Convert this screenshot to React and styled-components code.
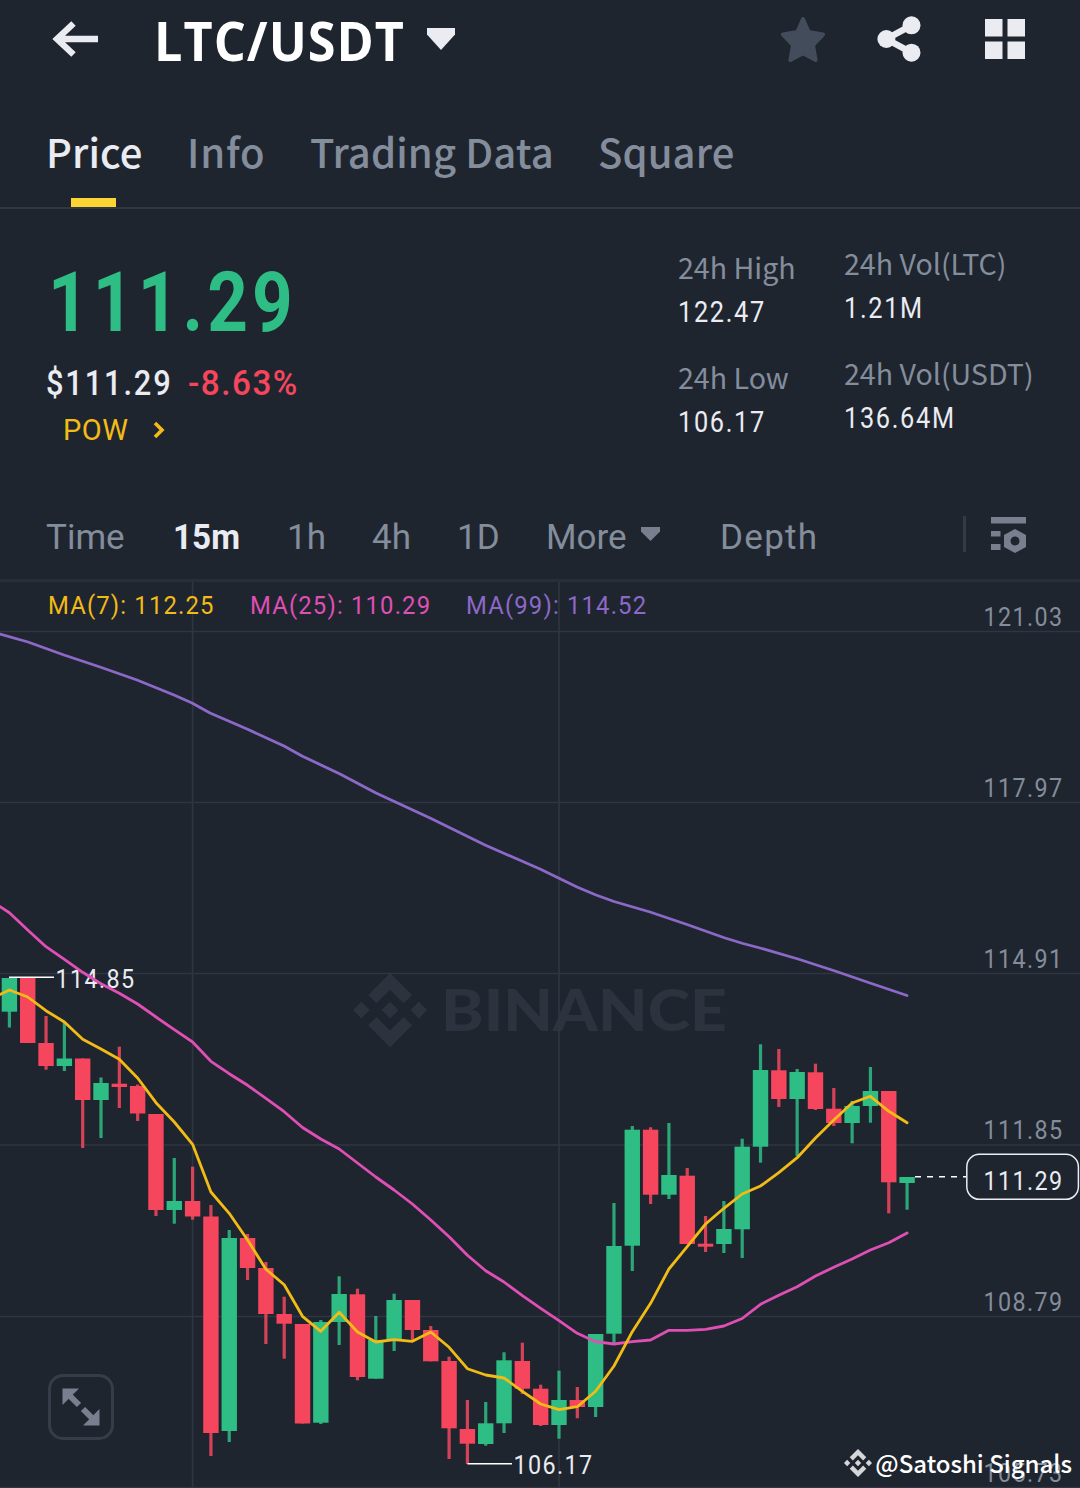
import React from 'react';
import styled, { createGlobalStyle } from 'styled-components';


const colors = {
  background: '#1f252f',
  line: '#303742',
  grid: '#2f3641',
  text: '#eaecf2',
  muted: '#848d9c',
  up: '#2ebd85',
  down: '#f6465d',
  yellow: '#f2bb16',
  pink: '#df4fb5',
  purple: '#8c69c8',
  watermark: '#2d333e'
};

const textFont = '"Noto Sans CJK SC", "Open Sans", sans-serif';
const numberFont = 'Roboto, "Liberation Sans", sans-serif';

const GlobalStyle = createGlobalStyle`
  body {
    margin: 0;
    background: ${colors.background};
    overflow: hidden;
  }
`

const Page = styled.div`
  width: 1080px;
  height: 1488px;
  display: flex;
  flex-direction: column;
  overflow: hidden;
  background: ${colors.background};
  color: ${colors.text};
  font-family: ${textFont};
`

const Icon = styled.svg`
  display: block;
  flex: none;
`

// Condensed text, the box keeps the given width and the glyphs are squeezed
const Label = styled.span`
  display: block;
  flex: none;
  width: ${ props => props.$width ? `${props.$width}px` : 'auto' };
  white-space: nowrap;
  font-family: ${ props => props.$number ? numberFont : textFont };
  font-size: ${ props => props.$size }px;
  line-height: ${ props => props.$height }px;
  font-weight: ${ props => props.$weight || 400 };
  letter-spacing: ${ props => props.$track || 0 }px;
  color: ${ props => props.$color || colors.text };
  transform: scaleX(${ props => props.$stretch || 1 });
  transform-origin: left center;
`

const Header = styled.header`
  box-sizing: border-box;
  height: 80px;
  display: flex;
  align-items: center;
  padding: 0 55px 2px 52px;
`

const Pair = styled.div`
  display: flex;
  align-items: center;
  gap: 22px;
  margin-left: 56px;
  flex: 1;
`

const PairName = styled(Label)`
  font-family: "Open Sans", sans-serif;
  padding-top: 3px;
`

const Actions = styled.div`
  display: flex;
  align-items: center;
  gap: 51px;

  & > :last-child {
    margin-left: 13px;
  }
`

const Tabs = styled.nav`
  box-sizing: border-box;
  height: 129px;
  display: grid;
  grid-template-columns: 141px 123px 288px 200px;
  padding: 41px 0 0 46px;
  border-bottom: 2px solid ${colors.line};
`

const Tab = styled.div`
  display: flex;
  flex-direction: column;
  justify-content: space-between;
`

const Underline = styled.div`
  width: 45px;
  height: 9px;
  margin-left: 25px;
  background: #fcd535;
`

const Summary = styled.section`
  height: 281px;
  display: flex;
  justify-content: space-between;
`

const Prices = styled.div`
  padding: 51px 0 0 46px;
`

const LastPrice = styled(Label)`
  margin-left: 2px;
`

const SubPrice = styled.div`
  display: flex;
  margin-top: 15px;
`

const Tag = styled.div`
  display: flex;
  align-items: center;
  margin: 3px 0 0 17px;
`

const Stats = styled.div`
  display: grid;
  grid-template-columns: 166px 236px;
`

const StatColumn = styled.div`
  padding-top: ${ props => props.$top }px;
`

const Stat = styled.div`
  height: 110px;
`

const Intervals = styled.nav`
  box-sizing: border-box;
  height: 92px;
  display: flex;
  align-items: center;
  padding: 7px 54px 0 46px;
  border-bottom: 3px solid #292f3a;
`

const MoreCaret = styled(Icon)`
  margin: 0 60px 8px 0;
`

const Separator = styled.div`
  width: 3px;
  height: 36px;
  margin: 0 25px 9px auto;
  background: #333a45;
`

const SettingsIcon = styled(Icon)`
  margin-bottom: 7px;
`

const ChartArea = styled.section`
  position: relative;
  height: 906px;
`

const Legend = styled.div`
  position: absolute;
  top: 7px;
  left: 48px;
  display: flex;
`

const ExpandButton = styled.button`
  position: absolute;
  left: 48px;
  bottom: 48px;
  box-sizing: border-box;
  width: 66px;
  height: 66px;
  padding: 0;
  display: flex;
  align-items: center;
  justify-content: center;
  border: 3px solid #363d48;
  border-radius: 15px;
  background: ${colors.background};
`

const Credit = styled.div`
  position: absolute;
  right: 8px;
  bottom: 7px;
  display: flex;
  align-items: center;
  gap: 3px;
`

const tabs = ['Price', 'Info', 'Trading Data', 'Square'];

const stats = [
  { top: 40, items: [
    { label: '24h High', value: '122.47' },
    { label: '24h Low', value: '106.17' }
  ]},
  { top: 36, items: [
    { label: '24h Vol(LTC)', value: '1.21M' },
    { label: '24h Vol(USDT)', value: '136.64M' }
  ]}
];

const legend = [
  { text: 'MA(7): 112.25', color: colors.yellow, width: 202 },
  { text: 'MA(25): 110.29', color: colors.pink, width: 216 },
  { text: 'MA(99): 114.52', color: colors.purple, width: 200 }
];

const axis = [
  { y: 631.5, label: '121.03' },
  { y: 802.5, label: '117.97' },
  { y: 973.5, label: '114.91' },
  { y: 1145, label: '111.85' },
  { y: 1316.5, label: '108.79' },
  { y: 1487.5, label: '105.73' }
];

// [rising, body top, body bottom, wick top, wick bottom]
const candles = [
  [1, 978, 1011.7, 978, 1027.5],
  [0, 978, 1043, 978, 1043],
  [0, 1043, 1066, 1016, 1069.7],
  [1, 1058.5, 1066, 1022.5, 1071],
  [0, 1058.5, 1100, 1058.5, 1148],
  [1, 1083, 1100, 1077.5, 1138],
  [0, 1083.7, 1087, 1046.7, 1108],
  [0, 1086, 1113.5, 1084.5, 1121],
  [0, 1114, 1210, 1114, 1216],
  [1, 1201, 1210, 1158, 1223.7],
  [0, 1201, 1216.5, 1166.7, 1219.7],
  [0, 1216.5, 1433, 1205, 1456],
  [1, 1238, 1431, 1230, 1442],
  [0, 1238, 1268, 1234, 1280],
  [0, 1268, 1314, 1262, 1344],
  [0, 1314, 1323.7, 1296.7, 1358.7],
  [0, 1324, 1423.5, 1324, 1423.5],
  [1, 1322, 1422.7, 1320, 1424],
  [1, 1294, 1322, 1276.3, 1345],
  [0, 1294.3, 1377, 1288.7, 1380.3],
  [1, 1340, 1378.7, 1316, 1378.7],
  [1, 1300, 1340, 1293.7, 1351],
  [0, 1300, 1330, 1300, 1340],
  [0, 1330, 1361.3, 1326, 1361.3],
  [0, 1361, 1428.3, 1356.7, 1459],
  [0, 1429, 1443.7, 1400, 1464],
  [1, 1423.3, 1444, 1402, 1445.7],
  [1, 1360.3, 1423.3, 1352.3, 1433],
  [0, 1361, 1388.7, 1342.7, 1394],
  [0, 1388.7, 1425, 1384.7, 1426],
  [1, 1400, 1425, 1370.7, 1438.7],
  [0, 1400, 1407, 1387, 1418.3],
  [1, 1334, 1407, 1334, 1417],
  [1, 1246, 1333.7, 1203, 1343.3],
  [1, 1129.7, 1245.7, 1126, 1271],
  [0, 1129.7, 1194.7, 1127.3, 1204],
  [1, 1175, 1194.7, 1123, 1199],
  [0, 1175.7, 1244, 1168, 1244],
  [0, 1243.7, 1246.7, 1216, 1252],
  [1, 1229, 1244, 1201, 1253],
  [1, 1146.7, 1229.3, 1138.7, 1258],
  [1, 1070, 1146.7, 1044.3, 1162.7],
  [0, 1070.3, 1099, 1049, 1107],
  [1, 1072, 1099, 1069, 1156],
  [0, 1072.3, 1109, 1063.7, 1110],
  [0, 1108.7, 1123, 1088, 1126],
  [1, 1106, 1123, 1101, 1143.3],
  [1, 1091, 1106, 1067, 1122.7],
  [0, 1091, 1182.3, 1091, 1213.3],
  [1, 1177, 1183, 1177, 1209.7]
];

const ma7 = [
  990, 997, 1010.7, 1022, 1039.3, 1049, 1059.3, 1078, 1102.7, 1122,
  1144.3, 1192, 1213.3, 1240, 1269.3, 1284.7, 1316.3, 1331.3, 1312.3, 1332,
  1342, 1339.7, 1341.3, 1332, 1347.3, 1368.7, 1375, 1378, 1391.3, 1404,
  1409.7, 1406.7, 1391.3, 1366, 1331.7, 1303.3, 1269, 1246.7, 1224, 1208.3,
  1194, 1186, 1172.7, 1157.7, 1138, 1120, 1103, 1096.3, 1111.3, 1122.7
];

const ma25 = [
  912.7, 930, 946.7, 959.3, 972.3, 983.7, 993.3, 1004, 1017, 1029.7,
  1042, 1061.3, 1073.7, 1085.3, 1098.3, 1111.7, 1127.5, 1139, 1149, 1163,
  1177, 1190, 1204, 1220, 1236.7, 1255.3, 1270.7, 1282, 1295.7, 1308.3,
  1320.7, 1333.3, 1341.7, 1344, 1341.7, 1340, 1330.3, 1330.3, 1329.3, 1326,
  1318.5, 1304.3, 1295.3, 1286.7, 1276, 1267.3, 1259, 1250, 1242.7, 1233
];

const ma99 = '0,634 28,642 64,655 100,667 137,680 174,695 192,703 210,713 247,729 284,746 302,756 340,774 376,793 430,818 485,845 540,869 577,887 596,895 614,901.5 650,912 687,924.5 725,938 743,943.5 760,948 798,959 835,971 870,983 907,995.5';

const candleX = i => 9.4 + i * 18.32;
const toPoints = (start, values) => (
  [`-1,${start}`].concat(values.map((y, i) => `${candleX(i).toFixed(1)},${y}`)).join(' ')
);

const ChartText = styled.text`
  font-family: ${numberFont};
  font-size: 26.5px;
  letter-spacing: 1.6px;
  fill: ${ props => props.$color };
`

const ChartLabel = ({ x, y, color, children }) => (
  <ChartText $color={color} transform={`translate(${x} ${y}) scale(0.88 1)`}>{children}</ChartText>
);

const WatermarkText = styled.text`
  font-family: Lato, sans-serif;
  font-weight: 900;
  font-size: 57px;
  fill: ${colors.watermark};
`

const MaLine = styled.polyline`
  fill: none;
  stroke: ${ props => props.$color };
  stroke-width: 2.8;
  stroke-linejoin: round;
  stroke-linecap: round;
`

const BinanceMark = () => (
  <g>
    <path d="M12 0 19.1 7.1 16.4 9.8 12 5.4 7.6 9.8 4.9 7.1Z" />
    <path d="M12 24 19.1 16.9 16.4 14.2 12 18.6 7.6 14.2 4.9 16.9Z" />
    <path d="M12 9.3 14.7 12 12 14.7 9.3 12ZM2.7 9.3 5.4 12 2.7 14.7 0 12ZM21.3 9.3 24 12 21.3 14.7 18.6 12Z" />
  </g>
);

const Chart = () => (
  <Icon width="1080" height="906" viewBox="0 582 1080 906">
    <g transform="translate(353 973) scale(3.09)" fill={colors.watermark}><BinanceMark /></g>
    <WatermarkText x="441" y="1031" textLength="286" lengthAdjust="spacingAndGlyphs">BINANCE</WatermarkText>
    <g stroke={colors.grid} strokeWidth="1.6">
      {axis.map(line => <line key={line.label} x1="0" x2="1080" y1={line.y} y2={line.y} />)}
      <line x1="192.6" x2="192.6" y1="582" y2="1488" />
      <line x1="559" x2="559" y1="582" y2="1488" />
    </g>
    {axis.map(line => (
      <ChartLabel key={line.label} x={983.5} y={line.y - 6} color={colors.muted}>{line.label}</ChartLabel>
    ))}
    {candles.map(([rising, top, bottom, high, low], i) => (
      <g key={i} fill={rising ? colors.up : colors.down}>
        <rect x={candleX(i) - 1.6} y={high} width="3.2" height={low - high} opacity="0.85" />
        <rect x={candleX(i) - 7.7} y={top} width="15.4" height={bottom - top} />
      </g>
    ))}
    <g stroke="#fff" strokeWidth="1.6">
      <line x1="9" x2="54" y1="977.2" y2="977.2" />
      <line x1="467.5" x2="512" y1="1463.7" y2="1463.7" />
      <line x1="915" x2="966" y1="1176.8" y2="1176.8" strokeDasharray="6 6" />
    </g>
    <ChartLabel x={55.5} y={987.5} color={colors.text}>114.85</ChartLabel>
    <ChartLabel x={513.5} y={1473.5} color={colors.text}>106.17</ChartLabel>
    <MaLine $color={colors.purple} points={ma99} />
    <MaLine $color={colors.pink} points={toPoints(906, ma25)} />
    <MaLine $color={colors.yellow} points={toPoints(995, ma7)} />
    <rect x="966.8" y="1154.3" width="111.6" height="45" rx="12.5" fill={colors.background} stroke={colors.text} strokeWidth="1.5" />
    <ChartLabel x={983.5} y={1189.7} color={colors.text}>111.29</ChartLabel>
  </Icon>
);

const Interval = props => (
  <Label $number $size={35} $height={46} $color={colors.muted} {...props} />
);

class App extends React.Component {
  render() {
    return (
      <Page>
        <GlobalStyle />

        <Header>
          <Icon width="46" height="36" viewBox="0 0 46 36" fill="none" stroke={colors.text} strokeWidth="6.4">
            <path d="M46 18H6M21.5 2.5 5 18 21.5 33.5" />
          </Icon>
          <Pair>
            <PairName $size={53} $height={70} $weight={700} $color="#fff" $width={251} $stretch={0.95} $track={1.1}>LTC/USDT</PairName>
            <Icon width="28" height="22" viewBox="0 0 28 22" fill={colors.text}>
              <path d="M0 0H28V6.5L14 22 0 6.5Z" />
            </Icon>
          </Pair>
          <Actions>
            <Icon width="46" height="46" viewBox="0 0 46 46" fill="#434c5a" stroke="#434c5a" strokeWidth="4" strokeLinejoin="round">
              <path d="M23 3 28.6 16 43 18.5 33 29 35.6 44 23 37.3 10.4 44 13 29 3 18.5 17.4 16Z" />
            </Icon>
            <Icon width="44" height="46" viewBox="0 0 44 46" fill={colors.text} stroke={colors.text}>
              <path d="M34.5 9.3 9.4 23 34.5 36.7" fill="none" strokeWidth="6.5" />
              <circle cx="34.5" cy="9.3" r="9" stroke="none" />
              <circle cx="9.4" cy="23" r="9" stroke="none" />
              <circle cx="34.5" cy="36.7" r="9" stroke="none" />
            </Icon>
            <Icon width="40" height="40" viewBox="0 0 40 40" fill={colors.text}>
              <path d="M0 0H17.5V17.5H0ZM22.5 0H40V17.5H22.5ZM0 22.5H17.5V40H0ZM22.5 22.5H40V40H22.5Z" />
            </Icon>
          </Actions>
        </Header>

        <Tabs>
          {tabs.map((name, i) => (
            <Tab key={name}>
              <Label $size={40} $height={60} $weight={500} $color={i === 0 ? colors.text : colors.muted} $track={name === 'Info' ? 0.8 : 0.1}>{name}</Label>
              {i === 0 && <Underline />}
            </Tab>
          ))}
        </Tabs>

        <Summary>
          <Prices>
            <LastPrice $number $size={82.5} $height={86} $weight={700} $color={colors.up} $stretch={0.86} $track={4.8}>111.29</LastPrice>
            <SubPrice>
              <Label $number $size={35} $height={46} $weight={500} $stretch={0.88} $track={2.1} $width={142}>$111.29</Label>
              <Label $number $size={35} $height={46} $weight={500} $color={colors.down} $stretch={0.95} $track={1.6}>-8.63%</Label>
            </SubPrice>
            <Tag>
              <Label $number $size={29} $height={40} $color={colors.yellow} $width={90} $track={0.5}>POW</Label>
              <Icon width="12" height="18" viewBox="0 0 12 18" fill="none" stroke={colors.yellow} strokeWidth="3.6">
                <path d="M2 2 9 9 2 16" />
              </Icon>
            </Tag>
          </Prices>
          <Stats>
            {stats.map(column => (
              <StatColumn key={column.top} $top={column.top}>
                {column.items.map(item => (
                  <Stat key={item.label}>
                    <Label $size={28.6} $height={36} $color={colors.muted}>{item.label}</Label>
                    <Label $number $size={28.8} $height={54} $stretch={0.88} $track={1.9}>{item.value}</Label>
                  </Stat>
                ))}
              </StatColumn>
            ))}
          </Stats>
        </Summary>

        <Intervals>
          <Interval $width={127}>Time</Interval>
          <Interval $weight={700} $color={colors.text} $stretch={0.95} $width={114}>15m</Interval>
          <Interval $width={85}>1h</Interval>
          <Interval $width={85}>4h</Interval>
          <Interval $width={89}>1D</Interval>
          <Interval $width={95}>More</Interval>
          <MoreCaret width="19" height="14" viewBox="0 0 19 14" fill="#78808f">
            <path d="M0 0H19V4.5L9.5 14 0 4.5Z" />
          </MoreCaret>
          <Interval $track={1.3}>Depth</Interval>
          <Separator />
          <SettingsIcon width="35" height="36" viewBox="0 0 35 36" fill="#78808f">
            <path d="M0 0H35V6.5H0ZM0 14H9.5V19.5H0ZM0 27H9.5V33H0Z" />
            <path fillRule="evenodd" d="M24 12 35 18V30L24 36 13 30V18ZM24 19.5A4.5 4.5 0 1 0 24 28.5 4.5 4.5 0 1 0 24 19.5Z" />
          </SettingsIcon>
        </Intervals>

        <ChartArea>
          <Chart />
          <Legend>
            {legend.map(item => (
              <Label key={item.text} $number $size={26.5} $height={32} $stretch={0.9} $track={1.3} $color={item.color} $width={item.width}>{item.text}</Label>
            ))}
          </Legend>
          <ExpandButton aria-label="Expand chart">
            <Icon width="38" height="38" viewBox="0 0 38 38" fill="#78808f" stroke="#78808f">
              <path stroke="none" d="M0.5 0.5H17L0.5 17ZM37.5 37.5H21L37.5 21Z" />
              <path d="M5 5 17 17M21 21 33 33" strokeWidth="6" />
            </Icon>
          </ExpandButton>
          <Credit>
            <Icon width="28" height="28" viewBox="0 0 24 24" fill="#d5d6d8"><BinanceMark /></Icon>
            <Label $size={24} $height={36} $weight={500} $color="#fff">@Satoshi Signals</Label>
          </Credit>
        </ChartArea>
      </Page>
    );
  }
}

export default App;
